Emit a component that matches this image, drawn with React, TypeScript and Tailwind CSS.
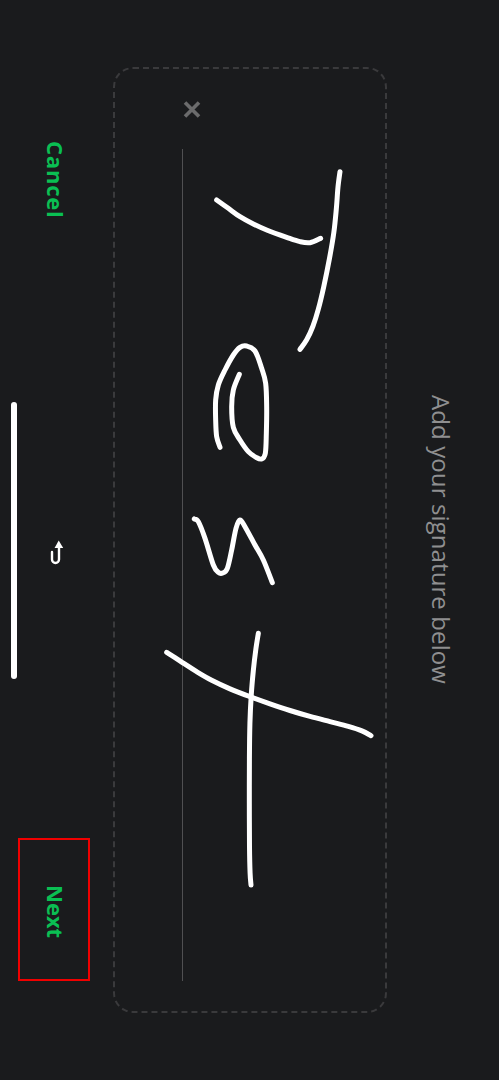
const z = (ox: number, oy: number, pts: number[][]) => pts.map(([x, y]) => [x / 3 + ox, y / 3 + oy]);

const relax = (p: number[][]) =>
  p.map((q, i) =>
    i === 0 || i === p.length - 1
      ? q
      : [0.25 * p[i - 1][0] + 0.5 * q[0] + 0.25 * p[i + 1][0], 0.25 * p[i - 1][1] + 0.5 * q[1] + 0.25 * p[i + 1][1]],
  );

const strokes: number[][][] = [
  z(100, 50, [[350,450],[385,475],[420,500],[460,522],[500,540],[560,562],[600,575],[630,578],[662,565]]),
  relax(z(100, 50, [[720,365],[713,400],[710,480],[703,545],[690,620],[670,720],[655,780],[640,830],[620,875],[600,898]])),
  z(150, 340, [[210,322],[200,290],[197,240],[197,180],[205,135],[225,90],[250,45],[270,22],[290,18],[315,33],[335,85],[347,130],[350,200],[349,280],[346,340],[335,357],[318,352],[295,335],[270,300],[250,262],[245,200],[250,150],[268,103]]),
  z(150, 340, [[133,537],[145,545],[165,595],[190,675],[205,697],[218,699],[232,685],[245,630],[258,565],[270,540],[285,560],[315,615],[340,660],[367,728]]),
  relax(z(150, 620, [[50,97],[75,112],[100,130],[140,155],[180,180],[240,208],[300,230],[360,252],[420,272],[480,290],[540,305],[600,320],[640,332],[663,347]])),
  relax(z(150, 620, [[325,40],[317,85],[310,150],[303,220],[299,310],[298,400],[298,550],[298,700],[300,770],[303,795]])),
];

function smooth(p: number[][]): string {
  let d = `M${p[0][0]} ${p[0][1]}`;
  for (let i = 0; i < p.length - 1; i++) {
    const a = p[Math.max(i - 1, 0)], b = p[i], c = p[i + 1], e = p[Math.min(i + 2, p.length - 1)];
    d += ` C${b[0] + (c[0] - a[0]) / 6} ${b[1] + (c[1] - a[1]) / 6} ${c[0] - (e[0] - b[0]) / 6} ${c[1] - (e[1] - b[1]) / 6} ${c[0]} ${c[1]}`;
  }
  return d;
}

export default function App() {
  return (
    <div className="flex h-[1080px] w-[499px] overflow-hidden bg-[#1a1b1d] font-['Open_Sans',sans-serif]">
      <div className="flex w-[18px] shrink-0 items-center justify-end pr-px">
        <div className="h-[277px] w-[6px] rounded-full bg-white" />
      </div>
      <div className="flex w-[72px] shrink-0 flex-col items-center pt-[141px]">
        <span className="ml-[4px] h-[79px] text-[22px] leading-7 font-bold tracking-[0.8px] text-[#0abf53] [writing-mode:vertical-rl]">Cancel</span>
        <svg className="mt-[320px] ml-[5px] h-[26px] w-[14px]" viewBox="50 539 14 26" fill="none">
          <path d="M59 545V558.5a3.5 3.5 0 0 1-7 0V551" stroke="#fff" strokeWidth="2.4" strokeLinecap="round" />
          <path d="M58.7 539.5 54.6 547H63.2Z" fill="#fff" />
        </svg>
        <div className="mt-[272px] flex h-[143px] w-[72px] items-start justify-center border-2 border-[#f00000] pl-[4px] pt-[45px]">
          <span className="text-[22px] leading-7 font-bold text-[#0abf53] [writing-mode:vertical-rl]">Next</span>
        </div>
      </div>
      <div className="relative mt-[67px] ml-[23px] h-[946px] w-[274px] shrink-0 rounded-[20px] border-2 border-dashed border-[#3a3a3c] pt-[31px] pl-[67px]">
        <svg className="ml-px h-[18px] w-[18px]" viewBox="0 0 18 18" fill="none">
          <path d="M2 2.5 16 16.5M16 2.5 2 16.5" stroke="#6b6b6c" strokeWidth="3.6" />
        </svg>
        <div className="mt-[31px] h-[832px] w-px bg-[#505052]" />
        <svg className="absolute -top-[2px] -left-[2px] h-[946px] w-[274px]" viewBox="113 67 274 946" fill="none">
          {strokes.map((s, i) => (
            <path key={i} d={smooth(s)} stroke="#fff" strokeWidth="5" strokeLinecap="round" strokeLinejoin="round" />
          ))}
        </svg>
      </div>
      <div className="ml-[40px] pt-[395px]">
        <span className="block text-[24px] leading-7 tracking-[0.1px] text-[#8f8f90] [writing-mode:vertical-rl]">Add your signature below</span>
      </div>
    </div>
  );
}
